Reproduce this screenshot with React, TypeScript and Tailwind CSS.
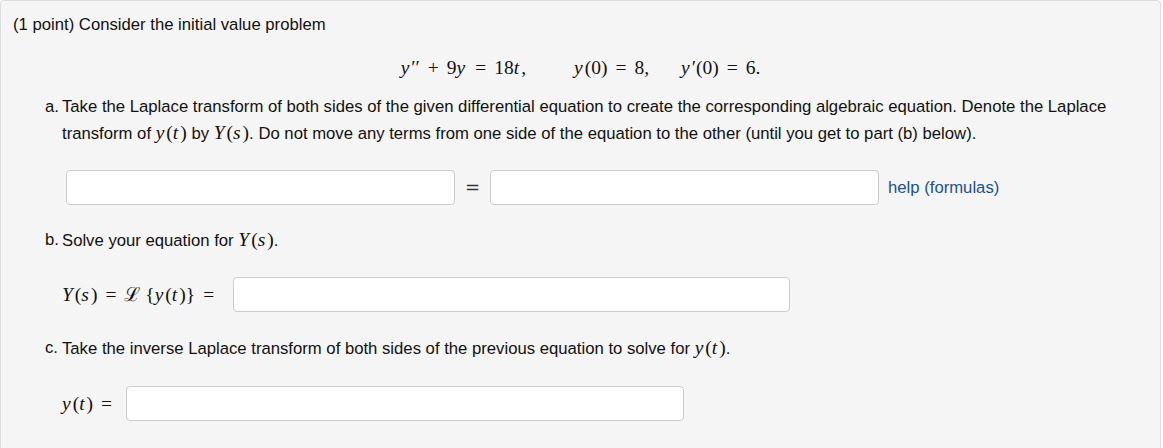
const M = ({ children, className = "" }: { children: React.ReactNode; className?: string }) => (
  <span className={`font-['Liberation_Serif','DejaVu_Serif',serif] text-[19.5px] ${className}`}>{children}</span>
);

const I = ({ children }: { children: React.ReactNode }) => <i className="pr-[2px]">{children}</i>;

// binary operator / relation with math spacing
const O = ({ children }: { children: React.ReactNode }) => <span className="mx-[8px]">{children}</span>;

const Field = ({ w }: { w: string }) => (
  <div className={`h-[35px] bg-white border border-[#cccccc] rounded-[4px] ${w}`}></div>
);

export default function App() {
  return (
    <div className="w-[1163px] h-[448px] bg-white overflow-hidden font-['Liberation_Sans',Arial,sans-serif] text-[16.7px] text-[#111]">
      <div className="w-[1161px] h-[460px] bg-[#f5f5f5] border border-[#dcdcdc] rounded-t-[4px] pl-[12px] pr-[12px] pt-[14px]">
        {/* title */}
        <div className="leading-[20px]">(1 point) Consider the initial value problem</div>

        {/* equation */}
        <div className="mt-[20px] h-[26px] flex items-center justify-center">
          <M>
            <I>y</I>′′<O>+</O>9<I>y</I><O>=</O>18<I>t</I>,
          </M>
          <M className="ml-[48px]">
            <I>y</I>(0)<O>=</O>8,
          </M>
          <M className="ml-[32px]">
            <I>y</I>′(0)<O>=</O>6.
          </M>
        </div>

        {/* part a */}
        <div className="mt-[13px] ml-[32px] flex leading-[26px]">
          <span className="w-[17px] shrink-0">a.</span>
          <p>
            Take the Laplace transform of both sides of the given differential equation to create the corresponding algebraic equation. Denote the Laplace transform of{" "}
            <M><I>y</I>(<I>t</I>)</M> by <M><I>Y</I>(<I>s</I>)</M>. Do not move any terms from one side of the equation to the other (until you get to part (b) below).
          </p>
        </div>

        <div className="mt-[23px] ml-[53px] flex items-center">
          <Field w="w-[389px]" />
          <span className="w-[35px] text-center text-[18px] text-[#333] font-['DejaVu_Serif',serif]">=</span>
          <Field w="w-[389px]" />
          <a className="ml-[9px] text-[#1d4f91] cursor-pointer">help (formulas)</a>
        </div>

        {/* part b */}
        <div className="mt-[22px] ml-[32px] flex leading-[26px]">
          <span className="w-[17px] shrink-0">b.</span>
          <p>
            Solve your equation for <M><I>Y</I>(<I>s</I>)</M>.
          </p>
        </div>

        <div className="mt-[23px] ml-[49px] flex items-center">
          <M>
            <I>Y</I>(<I>s</I>)<O>=</O>ℒ {"{"}<I>y</I>(<I>t</I>){"}"}<O>=</O>
          </M>
          <div className="ml-[11px]">
            <Field w="w-[557px]" />
          </div>
        </div>

        {/* part c */}
        <div className="mt-[23px] ml-[32px] flex leading-[26px]">
          <span className="w-[17px] shrink-0">c.</span>
          <p>
            Take the inverse Laplace transform of both sides of the previous equation to solve for <M><I>y</I>(<I>t</I>)</M>.
          </p>
        </div>

        <div className="mt-[24px] ml-[49px] flex items-center">
          <M>
            <I>y</I>(<I>t</I>)<O>=</O>
          </M>
          <div className="ml-[6px]">
            <Field w="w-[558px]" />
          </div>
        </div>
      </div>
    </div>
  );
}
